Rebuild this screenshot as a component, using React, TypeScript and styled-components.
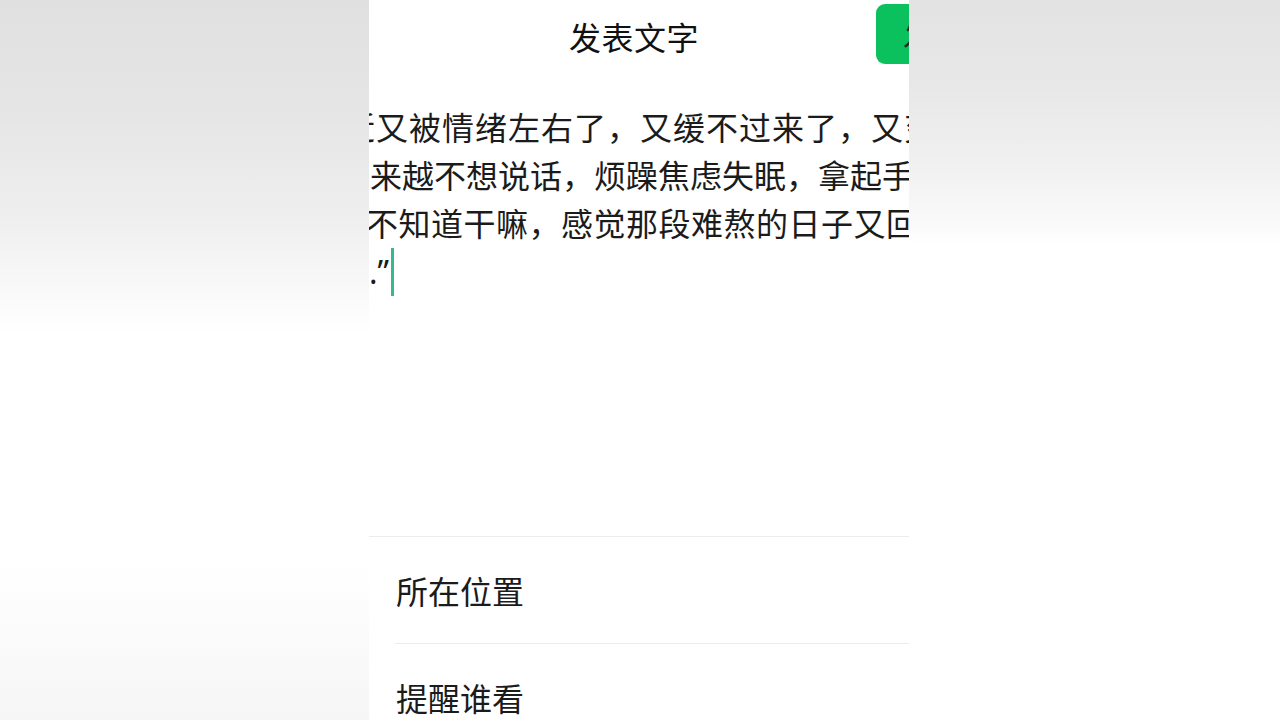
import React from "react";
import styled, { createGlobalStyle } from "styled-components";

const GlobalStyle = createGlobalStyle`
  html, body {
    margin: 0;
    padding: 0;
    background: #fff;
  }
  body {
    font-family: "Noto Sans", "Noto Sans CJK SC", sans-serif;
    color: #1b1b1b;
  }
`;

const Stage = styled.div`
  width: 1280px;
  height: 720px;
  display: grid;
  grid-template-columns: 369px 540px 1fr;
  overflow: hidden;
`;

const Backdrop = styled.div<{ $side: "left" | "right" }>`
  height: 720px;
  background: ${(p) =>
    p.$side === "left"
      ? "linear-gradient(180deg, #e0e0e0 0px, #e6e6e6 120px, #efefef 220px, #f9f9f9 290px, #ffffff 335px, #ffffff 560px, #f6f6f6 720px)"
      : "linear-gradient(180deg, #e3e3e3 0px, #e8e8e8 90px, #f1f1f1 170px, #fafafa 225px, #ffffff 245px, #ffffff 720px)"};
`;

const Screen = styled.div`
  height: 720px;
  background: #fff;
  overflow: hidden;
  display: flex;
  flex-direction: column;
`;

const Header = styled.header`
  height: 72px;
  flex-shrink: 0;
  display: grid;
  grid-template-columns: 1fr auto 1fr;
  align-items: center;
  padding-right: 10px;
  margin-bottom: 2px;
`;

const Title = styled.h1`
  grid-column: 2;
  margin: 0;
  font-size: 32px;
  font-weight: 400;
  color: #111;
  letter-spacing: 0.5px;
`;

const PublishButton = styled.button`
  grid-column: 3;
  justify-self: end;
  align-self: start;
  margin: 4px -91px 0 0;
  height: 60px;
  padding: 0 27px;
  border: none;
  border-radius: 9px;
  background: #0ac15e;
  color: #2a2a2a;
  font-family: inherit;
  font-size: 30px;
  white-space: nowrap;
`;

const Composer = styled.div`
  height: 462px;
  flex-shrink: 0;
  box-sizing: border-box;
  padding-top: 30px;
`;

const TextLine = styled.div<{ $shift: number; $spacing: number }>`
  height: 48px;
  line-height: 48px;
  font-size: 32px;
  white-space: nowrap;
  color: #1b1b1b;
  margin-left: ${(p) => p.$shift}px;
  letter-spacing: ${(p) => p.$spacing}px;
`;

const Caret = styled.span`
  display: inline-block;
  width: 3px;
  height: 48px;
  margin-left: 2px;
  vertical-align: top;
  background: #36ba8d;
`;

const Divider = styled.div<{ $inset: number }>`
  height: 1px;
  flex-shrink: 0;
  margin-left: ${(p) => p.$inset}px;
  background: #ececec;
`;

const OptionRow = styled.div`
  height: 106px;
  flex-shrink: 0;
  display: flex;
  align-items: center;
  padding-left: 27px;
  font-size: 32px;
  color: #1b1b1b;
`;

const lines = [
  { text: "最近又被情绪左右了，又缓不过来了，又变得越", shift: -59, spacing: 1 },
  { text: "来越不想说话，烦躁焦虑失眠，拿起手机", shift: 1, spacing: 0 },
  { text: "不知道干嘛，感觉那段难熬的日子又回来了", shift: -3, spacing: 0.5 },
];

export default function App() {
  return (
    <>
      <GlobalStyle />
      <Stage>
        <Backdrop $side="left" />
        <Screen>
          <Header>
            <Title>发表文字</Title>
            <PublishButton>发表</PublishButton>
          </Header>
          <Composer>
            {lines.map((l) => (
              <TextLine key={l.text} $shift={l.shift} $spacing={l.spacing}>
                {l.text}
              </TextLine>
            ))}
            <TextLine $shift={0} $spacing={0}>
              .”
              <Caret />
            </TextLine>
          </Composer>
          <Divider $inset={0} />
          <OptionRow>所在位置</OptionRow>
          <Divider $inset={26} />
          <OptionRow>提醒谁看</OptionRow>
        </Screen>
        <Backdrop $side="right" />
      </Stage>
    </>
  );
}
